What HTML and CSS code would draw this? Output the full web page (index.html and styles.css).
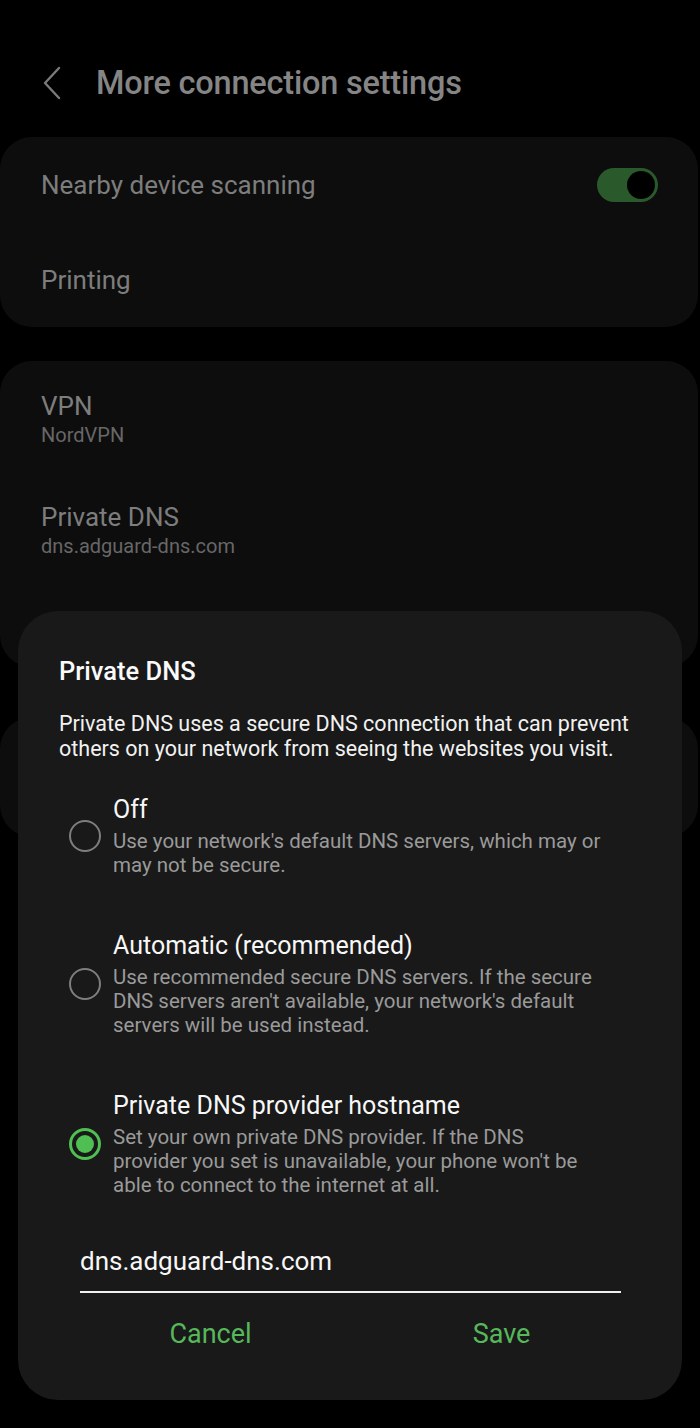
FILE: index.html
```html
<!DOCTYPE html>
<html lang="en">
<head>
<meta charset="utf-8">
<title>More connection settings</title>
<link rel="stylesheet" href="styles.css">
</head>
<body>
<div class="screen">
  <header class="topbar">
    <svg class="back" width="20" height="34" viewBox="0 0 20 34"><path d="M17 2 L3 17 L17 32" fill="none" stroke="#7a7a7a" stroke-width="2.4" stroke-linecap="round" stroke-linejoin="round"/></svg>
    <h1 class="title">More connection settings</h1>
  </header>

  <section class="card card-a">
    <div class="row row-a">
      <span class="row-title">Nearby device scanning</span>
      <span class="switch"><span class="knob"></span></span>
    </div>
    <div class="row row-a">
      <span class="row-title">Printing</span>
    </div>
  </section>

  <section class="card card-b">
    <div class="row row-b">
      <div class="stack">
        <span class="row-title">VPN</span>
        <span class="row-sub">NordVPN</span>
      </div>
    </div>
    <div class="row row-b">
      <div class="stack">
        <span class="row-title">Private DNS</span>
        <span class="row-sub">dns.adguard-dns.com</span>
      </div>
    </div>
  </section>

  <section class="card card-c"></section>

  <div class="dialog">
    <h2 class="dlg-title">Private DNS</h2>
    <p class="dlg-desc">Private DNS uses a secure DNS connection that can prevent others on your network from seeing the websites you visit.</p>

    <div class="option opt-first">
      <span class="radio"></span>
      <div class="opt-text">
        <div class="opt-title">Off</div>
        <div class="opt-desc">Use your network's default DNS servers, which may or may not be secure.</div>
      </div>
    </div>

    <div class="option">
      <span class="radio"></span>
      <div class="opt-text">
        <div class="opt-title">Automatic (recommended)</div>
        <div class="opt-desc">Use recommended secure DNS servers. If the secure DNS servers aren't available, your network's default servers will be used instead.</div>
      </div>
    </div>

    <div class="option">
      <span class="radio radio-on"><span class="dot"></span></span>
      <div class="opt-text">
        <div class="opt-title">Private DNS provider hostname</div>
        <div class="opt-desc">Set your own private DNS provider. If the DNS provider you set is unavailable, your phone won't be able to connect to the internet at all.</div>
      </div>
    </div>

    <div class="field">dns.adguard-dns.com</div>

    <div class="actions">
      <span class="btn">Cancel</span>
      <span class="btn">Save</span>
    </div>
  </div>
</div>
</body>
</html>
```

FILE: styles.css
```css
* { box-sizing: border-box; margin: 0; padding: 0; }

html, body {
  background: #000;
}

body {
  font-family: Roboto, "Noto Sans", "Liberation Sans", sans-serif;
  width: 700px;
  height: 1428px;
  overflow: hidden;
}

.screen {
  position: relative;
  width: 700px;
  height: 1428px;
}

.topbar {
  height: 137px;
  display: flex;
  align-items: flex-start;
  padding: 64px 0 0 42px;
  gap: 34px;
}

.back {
  display: block;
  margin-top: 2px;
}

.title {
  font-size: 32.5px;
  font-weight: 500;
  line-height: 38px;
  color: #858585;
  letter-spacing: -0.2px;
}

.card {
  background: #0d0d0d;
  border-radius: 32px;
  width: 698px;
}

.card-a { height: 190px; }
.card-b { margin-top: 34px; height: 306px; padding-top: 1px; }
.card-c { margin-top: 50px; height: 120px; }

.row {
  display: flex;
  align-items: center;
  justify-content: space-between;
  padding: 0 40px 0 41px;
}

.row-a { height: 95px; }
.row-b { height: 111px; padding-top: 2px; }

.row-title {
  font-size: 26px;
  color: #7d7d7d;
  line-height: 32px;
}

.stack {
  display: flex;
  flex-direction: column;
}

.row-sub {
  font-size: 20px;
  color: #676767;
  line-height: 26px;
}

.switch {
  width: 61px;
  height: 34px;
  border-radius: 17px;
  background: #2a5a2c;
  position: relative;
  display: block;
}

.knob {
  position: absolute;
  right: 3px;
  top: 3px;
  width: 28px;
  height: 28px;
  border-radius: 50%;
  background: #000;
}

.dialog {
  position: absolute;
  left: 18px;
  top: 611px;
  width: 664px;
  height: 789px;
  background: #191919;
  border-radius: 40px;
  padding: 44px 41px 0 41px;
}

.dlg-title {
  font-size: 25.5px;
  font-weight: 500;
  line-height: 32px;
  color: #fafafa;
}

.dlg-desc {
  margin-top: 24px;
  font-size: 21.5px;
  line-height: 25px;
  color: #f2f2f2;
}

.option {
  display: flex;
  align-items: center;
  gap: 12px;
  margin-top: 53px;
}

.opt-first { margin-top: 33px; }

.radio {
  flex: none;
  width: 32px;
  height: 32px;
  margin-left: 10px;
  border-radius: 50%;
  border: 2.5px solid #7e7e7e;
  display: flex;
  align-items: center;
  justify-content: center;
}

.radio-on {
  border: 3px solid #4fbf53;
}

.dot {
  width: 18px;
  height: 18px;
  border-radius: 50%;
  background: #4fbf53;
}

.opt-text {
  width: 488px;
}

.opt-title {
  font-size: 25px;
  line-height: 32px;
  color: #f7f7f7;
}

.opt-desc {
  margin-top: 3px;
  font-size: 20.5px;
  line-height: 24px;
  color: #9a9a9a;
}

.field {
  margin: 48px 20px 0 21px;
  font-size: 26px;
  line-height: 32px;
  color: #f7f7f7;
  padding-bottom: 14px;
  border-bottom: 2px solid #f0f0f0;
}

.actions {
  display: grid;
  grid-template-columns: 1fr 1fr;
  margin: 25px -6px 0 6px;
}

.btn {
  text-align: center;
  font-size: 27px;
  line-height: 32px;
  color: #56b85a;
  font-weight: 400;
}
```
